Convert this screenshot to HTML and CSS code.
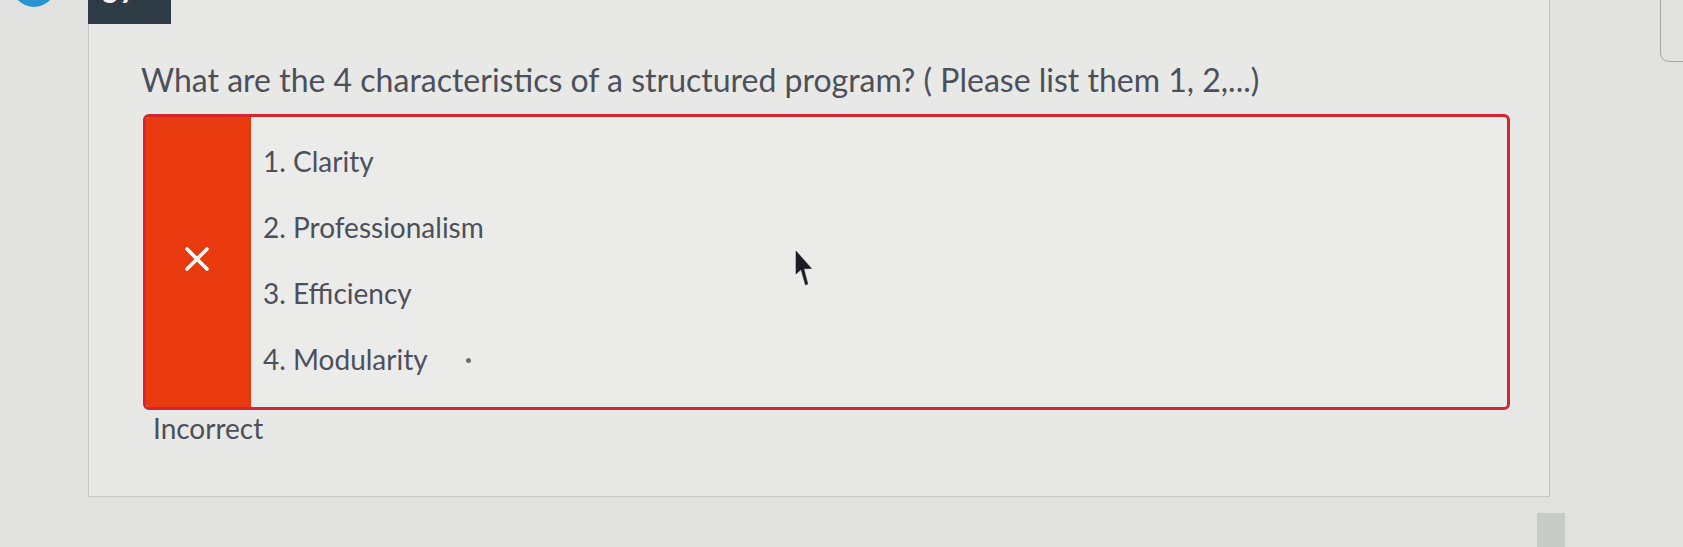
FILE: index.html
```html
<!DOCTYPE html>
<html lang="en">
<head>
<meta charset="utf-8">
<title>Quiz question</title>
<link rel="stylesheet" href="styles.css">
</head>
<body>
<div class="page">
  <div class="gutter">
    <div class="flag"></div>
  </div>
  <div class="main">
    <div class="card">
      <div class="qhead"><span class="qnum">57</span></div>
      <div class="qtext">What are the 4 characteristics of a structured program? ( Please list them 1, 2,...)</div>
      <div class="answer">
        <div class="mark">
          <svg width="26" height="26" viewBox="0 0 26 26" aria-hidden="true">
            <path d="M3 3 L23 23 M23 3 L3 23" stroke="#ffffff" stroke-width="3.6" stroke-linecap="round" fill="none"/>
          </svg>
        </div>
        <div class="response">
          <p class="item">1. Clarity</p>
          <p class="item">2. Professionalism</p>
          <p class="item">3. Efficiency</p>
          <p class="item">4. Modularity <span class="speck"></span></p>
        </div>
        <svg class="cursor" width="20" height="38" viewBox="0 0 20 38" aria-hidden="true">
          <path d="M1 1 L1 24 L6 19.5 L10.5 35 L12.8 34 L8.8 18.8 L16.5 18.5 Z" fill="#1b1b22" stroke="#2a2a30" stroke-width="0.6" stroke-linejoin="round"/>
        </svg>
      </div>
      <div class="status">Incorrect</div>
    </div>
    <div class="below">
      <div class="thumb"></div>
    </div>
  </div>
  <div class="rightcol">
    <div class="panel-edge"></div>
  </div>
</div>
</body>
</html>
```
FILE: styles.css
```css
html, body {
  margin: 0;
  padding: 0;
}
body {
  width: 1683px;
  height: 547px;
  overflow: hidden;
  background: #e1e1df;
  font-family: Lato, "Noto Sans", "Liberation Sans", sans-serif;
  color: #4b505b;
}
.page {
  display: flex;
  width: 1683px;
  height: 547px;
  overflow: hidden;
}
.gutter {
  width: 88px;
  flex: none;
}
.flag {
  width: 44px;
  height: 44px;
  border-radius: 50%;
  background: #2a93d2;
  margin-top: -37px;
  margin-left: 12px;
}
.main {
  width: 1462px;
  flex: none;
  display: flex;
  flex-direction: column;
}
.card {
  height: 497px;
  flex: none;
  box-sizing: border-box;
  border: 1px solid #c6c8c6;
  border-top: none;
  background: #e8e8e6;
  display: flex;
  flex-direction: column;
  align-items: flex-start;
}
.qhead {
  width: 83px;
  height: 24px;
  flex: none;
  background: #2e3b44;
  margin-left: -1px;
  overflow: hidden;
}
.qnum {
  display: block;
  color: #eef0f2;
  font-size: 30px;
  font-weight: 700;
  line-height: 30px;
  margin-top: -24px;
  margin-left: 14px;
}
.qtext {
  margin-top: 37px;
  margin-left: 52px;
  font-size: 32px;
  line-height: 38px;
  white-space: nowrap;
}
.answer {
  margin-top: 15px;
  margin-left: 54px;
  width: 1367px;
  height: 296px;
  flex: none;
  box-sizing: border-box;
  border: 3px solid #d3262e;
  border-radius: 6px;
  display: flex;
  background: #ebebe9;
  overflow: hidden;
  position: relative;
}
.mark {
  width: 108px;
  flex: none;
  background: #e8390f;
  display: flex;
  align-items: center;
  justify-content: center;
  margin: -3px 0 -3px -3px;
  padding-bottom: 6px;
}
.response {
  padding: 11px 0 0 12px;
}
.item {
  margin: 0;
  font-size: 28px;
  line-height: 66px;
  white-space: nowrap;
}
.speck {
  display: inline-block;
  width: 5px;
  height: 5px;
  border-radius: 50%;
  background: #6c6f74;
  margin-left: 32px;
  vertical-align: 7px;
}
.cursor {
  position: absolute;
  left: 649px;
  top: 133px;
}
.status {
  margin-top: 2px;
  margin-left: 64px;
  font-size: 28px;
  line-height: 32px;
}
.below {
  display: flex;
  justify-content: flex-end;
}
.thumb {
  width: 28px;
  height: 40px;
  margin-top: 16px;
  background: #c9cbc6;
  margin-right: -15px;
}
.rightcol {
  margin-left: 110px;
  flex: none;
}
.panel-edge {
  width: 40px;
  height: 62px;
  box-sizing: border-box;
  border: 1px solid #a3a5a6;
  border-top: none;
  border-radius: 0 0 0 9px;
}
```
